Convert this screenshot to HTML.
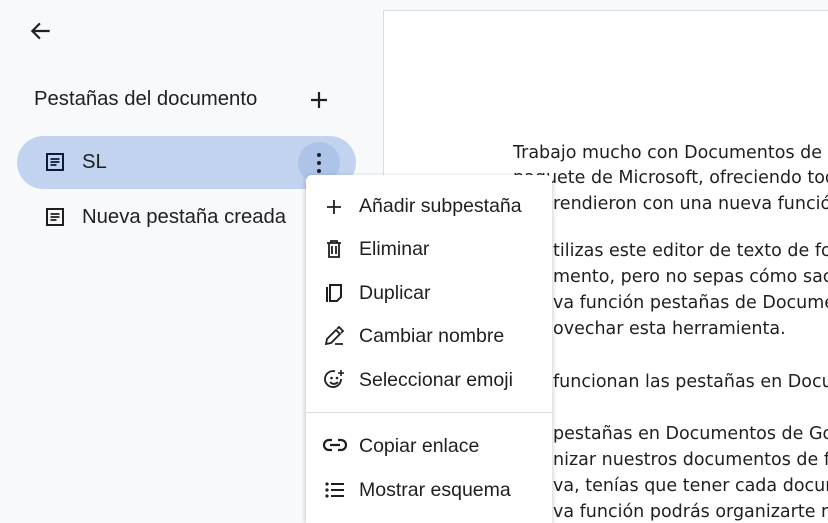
<!DOCTYPE html>
<html><head><meta charset="utf-8"><style>
*{margin:0;padding:0;box-sizing:border-box}
html,body{width:828px;height:523px;overflow:hidden}
body{background:#f8f9fb;position:relative;font-family:"Liberation Sans",Arial,sans-serif;color:#1f1f1f}
.page{position:absolute;left:383px;top:10px;width:445px;height:513px;background:#fff;border:1px solid #dadce0;border-right:none;border-bottom:none;overflow:hidden}
.t{position:absolute;font-family:"DejaVu Sans",sans-serif;font-size:17.5px;color:#1f1f1f;white-space:nowrap;line-height:20px}
.side{position:absolute;font-size:20.3px;white-space:nowrap}
.sel{position:absolute;left:17px;top:136px;width:339px;height:53px;border-radius:27px;background:#c2d3f0}
.dots{position:absolute;left:298px;top:142px;width:42px;height:42px;border-radius:50%;background:#aec3e8}
.menu{position:absolute;left:306px;top:175px;width:246px;height:348px;background:#fff;border-radius:6px 6px 0 0;box-shadow:0 2px 6px rgba(0,0,0,.25)}
.mi{position:absolute;left:53px;font-size:19.5px;white-space:nowrap;color:#1f1f1f}
.ic{position:absolute;left:18px}
</style></head><body>
<svg style="position:absolute;left:28px;top:18px" width="26" height="26" viewBox="0 0 24 24"><path d="M20 12H5M11 5l-7 7 7 7" fill="none" stroke="#1f1f1f" stroke-width="2"/></svg>
<div class="side" style="left:34px;top:88px;color:#1f1f1f">Pestañas del documento</div>
<svg style="position:absolute;left:309px;top:90px" width="20" height="20" viewBox="0 0 20 20"><path d="M10 2v16M2 10h16" stroke="#1f1f1f" stroke-width="2.2"/></svg>
<div class="sel"></div>
<div class="dots"></div>
<svg style="position:absolute;left:314px;top:152px" width="10" height="22" viewBox="0 0 10 22"><circle cx="5" cy="3" r="2" fill="#1f1f1f"/><circle cx="5" cy="11" r="2" fill="#1f1f1f"/><circle cx="5" cy="19" r="2" fill="#1f1f1f"/></svg>
<svg style="position:absolute;left:45px;top:152px" width="20" height="20" viewBox="0 0 20 20"><rect x="2" y="2" width="16" height="16" fill="none" stroke="#0b1a3a" stroke-width="2"/><path d="M5.5 7h9M5.5 10h9M5.5 13h6" stroke="#0b1a3a" stroke-width="1.8"/></svg>
<div class="side" style="left:82px;top:151px">SL</div>
<svg style="position:absolute;left:45px;top:207px" width="20" height="20" viewBox="0 0 20 20"><rect x="2" y="2" width="16" height="16" fill="none" stroke="#1f1f1f" stroke-width="2"/><path d="M5.5 7h9M5.5 10h9M5.5 13h6" stroke="#1f1f1f" stroke-width="1.8"/></svg>
<div class="side" style="left:82px;top:206px">Nueva pestaña creada</div>
<div class="page">
<div class="t" style="left:129px;top:132px">Trabajo mucho con Documentos de Google</div>
<div class="t" style="left:129px;top:157px">paquete de Microsoft, ofreciendo todo</div>
<div class="t" style="left:169px;top:183px">rendieron con una nueva función</div>
<div class="t" style="left:169px;top:230px">tilizas este editor de texto de forma</div>
<div class="t" style="left:169px;top:256px">mento, pero no sepas cómo sacarle</div>
<div class="t" style="left:169px;top:282px">va función pestañas de Documentos</div>
<div class="t" style="left:169px;top:308px">ovechar esta herramienta.</div>
<div class="t" style="left:169px;top:361px">funcionan las pestañas en Documentos</div>
<div class="t" style="left:169px;top:413px">pestañas en Documentos de Google</div>
<div class="t" style="left:169px;top:439px">nizar nuestros documentos de forma</div>
<div class="t" style="left:169px;top:465px">va, tenías que tener cada documento</div>
<div class="t" style="left:169px;top:491px">va función podrás organizarte mejor</div>
</div>
<div class="menu">
<svg class="ic" style="top:22px" width="20" height="20" viewBox="0 0 20 20"><path d="M10 3v14M3 10h14" stroke="#1f1f1f" stroke-width="1.8"/></svg>
<div class="mi" style="top:20px">Añadir subpestaña</div>
<svg class="ic" style="top:64px" width="20" height="20" viewBox="0 0 20 20"><path d="M3 4h14M7 4V2h6v2M5 4v14h10V4M8 7v8M12 7v8" fill="none" stroke="#1f1f1f" stroke-width="1.8"/></svg>
<div class="mi" style="top:63px">Eliminar</div>
<svg class="ic" style="top:108px" width="20" height="22" viewBox="0 0 20 22"><path d="M3 4v15M6 2h11v12l-4 4H6z" fill="none" stroke="#1f1f1f" stroke-width="2"/></svg>
<div class="mi" style="top:107px">Duplicar</div>
<svg class="ic" style="top:151px" width="22" height="20" viewBox="0 0 22 20"><path d="M2 18l1-5 9-9 4 4-9 9zM13 3l2-2 4 4-2 2M11 18h8" fill="none" stroke="#1f1f1f" stroke-width="1.8"/></svg>
<div class="mi" style="top:150px">Cambiar nombre</div>
<svg class="ic" style="top:194px" width="22" height="22" viewBox="0 0 22 22"><path d="M17 10a8 8 0 1 1-6-7.7" fill="none" stroke="#1f1f1f" stroke-width="1.8"/><path d="M17 1v6M14 4h6" stroke="#1f1f1f" stroke-width="1.6"/><circle cx="7.5" cy="9" r="1.3" fill="#1f1f1f"/><circle cx="13" cy="9" r="1.3" fill="#1f1f1f"/><path d="M6 13q4 4 8 0" fill="none" stroke="#1f1f1f" stroke-width="1.8"/></svg>
<div class="mi" style="top:194px">Seleccionar emoji</div>
<div style="position:absolute;left:0;top:237px;width:246px;height:1px;background:#dadce0"></div>
<svg class="ic" style="top:262px;left:16px" width="26" height="16" viewBox="0 0 26 16"><path d="M10 3H7a5 5 0 0 0 0 10h3M16 3h3a5 5 0 0 1 0 10h-3M8 8h10" fill="none" stroke="#1f1f1f" stroke-width="2.2"/></svg>
<div class="mi" style="top:260px">Copiar enlace</div>
<svg class="ic" style="top:305px" width="22" height="20" viewBox="0 0 22 20"><circle cx="3" cy="4" r="1.6" fill="#1f1f1f"/><circle cx="3" cy="10" r="1.6" fill="#1f1f1f"/><circle cx="3" cy="16" r="1.6" fill="#1f1f1f"/><path d="M7 4h13M7 10h13M7 16h13" stroke="#1f1f1f" stroke-width="2"/></svg>
<div class="mi" style="top:304px">Mostrar esquema</div>
</div>
</body></html>
